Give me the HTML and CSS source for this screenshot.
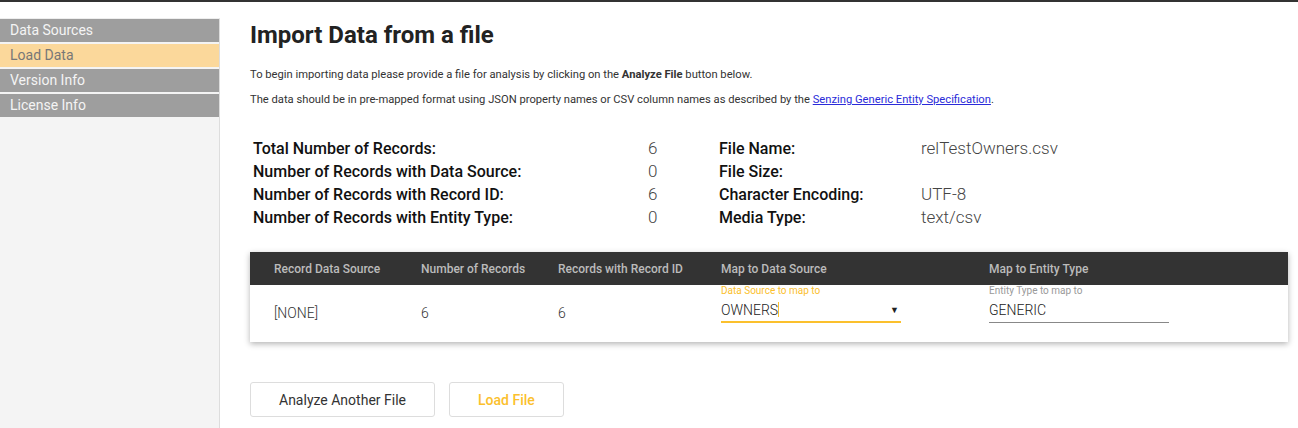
FILE: index.html
```html
<!DOCTYPE html>
<html lang="en">
<head>
  <meta charset="UTF-8">
  <meta name="viewport" content="width=device-width, initial-scale=1.0">
  <title>Load Data</title>
  <link rel="stylesheet" href="styles.css">
</head>
<body>
  <div class="layout">
    <nav class="sidebar">
      <a class="menu-item">Data Sources</a>
      <a class="menu-item active">Load Data</a>
      <a class="menu-item">Version Info</a>
      <a class="menu-item">License Info</a>
    </nav>

    <main class="content">
      <h1>Import Data from a file</h1>
      <p class="intro">To begin importing data please provide a file for analysis by clicking on the <b>Analyze File</b> button below.</p>
      <p class="intro">The data should be in pre-mapped format using JSON property names or CSV column names as described by the <a href="#">Senzing Generic Entity Specification</a>.</p>

      <div class="stats">
        <div class="stats-col left">
          <span class="label">Total Number of Records:</span><span class="value">6</span>
          <span class="label">Number of Records with Data Source:</span><span class="value">0</span>
          <span class="label">Number of Records with Record ID:</span><span class="value">6</span>
          <span class="label">Number of Records with Entity Type:</span><span class="value">0</span>
        </div>
        <div class="stats-col right">
          <span class="label">File Name:</span><span class="value">relTestOwners.csv</span>
          <span class="label">File Size:</span><span class="value"></span>
          <span class="label">Character Encoding:</span><span class="value">UTF-8</span>
          <span class="label">Media Type:</span><span class="value">text/csv</span>
        </div>
      </div>

      <div class="card">
        <div class="row head">
          <div>Record Data Source</div>
          <div>Number of Records</div>
          <div>Records with Record ID</div>
          <div>Map to Data Source</div>
          <div>Map to Entity Type</div>
        </div>
        <div class="row body">
          <div class="cell">[NONE]</div>
          <div class="cell">6</div>
          <div class="cell">6</div>
          <div class="field focused">
            <label>Data Source to map to</label>
            <div class="input">OWNERS<span class="caret"></span><span class="arrow">&#9660;</span></div>
          </div>
          <div class="field">
            <label>Entity Type to map to</label>
            <div class="input">GENERIC</div>
          </div>
        </div>
      </div>

      <div class="actions">
        <button class="btn">Analyze Another File</button>
        <button class="btn primary">Load File</button>
      </div>
    </main>
  </div>
</body>
</html>
```

FILE: styles.css
```css
html, body {
  height: 100%;
}
body {
  font-family: Roboto, "Liberation Sans", sans-serif;
  margin: 0;
  padding: 0;
  background: white;
  color: #222;
  border-top: 2px solid #333;
  box-sizing: border-box;
  overflow: hidden;
}
.layout {
  display: flex;
  height: 100%;
  padding-top: 16px;
  box-sizing: border-box;
}
.sidebar {
  width: 219px;
  flex: none;
  background: #f4f4f4;
  border-right: 1px solid #ddd;
  border-top: 1px solid #eee;
  display: flex;
  flex-direction: column;
  gap: 2px;
}
.menu-item {
  display: block;
  height: 23px;
  line-height: 23px;
  padding-left: 10px;
  font-size: 14px;
  background: #9e9e9e;
  color: #f4f4f4;
}
.menu-item.active {
  background: #fbd89b;
  color: #777;
}
.content {
  padding-left: 30px;
  width: 1038px;
}
h1 {
  font-size: 24px;
  font-weight: 700;
  margin: 2px 0 18px;
  line-height: 30px;
}
.intro {
  font-size: 11.2px;
  color: #333;
  margin: 0 0 12px;
  line-height: 13px;
}
.intro a {
  color: #2b2bd9;
}
.stats {
  display: flex;
  margin: 31px 0 0 3px;
}
.stats-col {
  display: grid;
  font-size: 16px;
  line-height: 23px;
}
.stats-col.left {
  grid-template-columns: 395px 71px;
}
.stats-col.right {
  grid-template-columns: 202px 150px;
}
.label {
  font-weight: 500;
  color: #111;
}
.value {
  color: #444;
  font-weight: 300;
  font-size: 17px;
}
.card {
  margin-top: 23px;
  box-shadow: 0 2px 6px rgba(0,0,0,0.3);
}
.row {
  display: grid;
  grid-template-columns: 147px 137px 163px 268px 1fr;
  padding-left: 24px;
}
.row.head {
  background: #333;
  color: #bbb;
  font-size: 12px;
  font-weight: 500;
  height: 33px;
  align-items: center;
}
.row.body {
  height: 57px;
  font-size: 14px;
  color: #333;
  align-items: start;
}
.cell {
  padding-top: 19px;
  line-height: 18px;
  font-weight: 300;
}
.field {
  width: 180px;
}
.field label {
  display: block;
  font-size: 10px;
  color: #999;
  line-height: 12px;
}
.field .input {
  position: relative;
  font-size: 14px;
  font-weight: 300;
  line-height: 18px;
  margin-top: 4px;
  padding-bottom: 3px;
  border-bottom: 1px solid #888;
  color: #222;
}
.field.focused label {
  color: #fbc02d;
}
.field.focused .input {
  border-bottom: 2px solid #fbc02d;
  padding-bottom: 2px;
}
.caret {
  display: inline-block;
  width: 1px;
  height: 15px;
  background: #fbc02d;
  vertical-align: -2px;
}
.arrow {
  position: absolute;
  right: 2px;
  top: 0;
  font-size: 9px;
  color: #222;
}
.actions {
  display: flex;
  gap: 14px;
  margin-top: 40px;
}
.btn {
  font-family: inherit;
  font-size: 14px;
  font-weight: 400;
  height: 35px;
  padding: 0 28px;
  background: white;
  border: 1px solid #ddd;
  border-radius: 3px;
  color: #333;
  cursor: pointer;
}
.btn.primary {
  color: #fbc02d;
  font-weight: 500;
}
```
